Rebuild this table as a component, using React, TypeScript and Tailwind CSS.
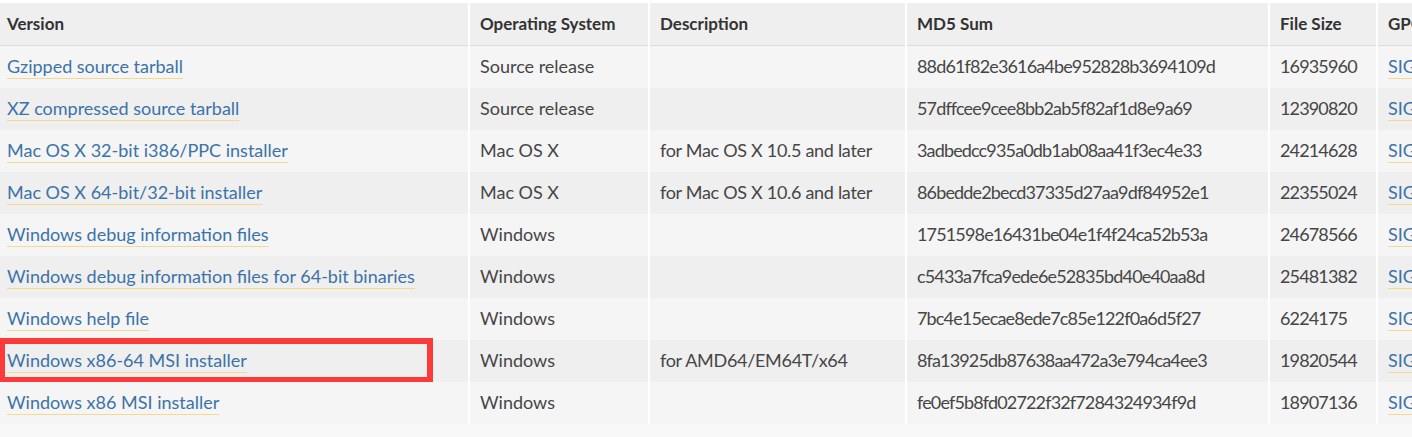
import React from "react";

type Row = {
  version: string;
  os: string;
  desc: string;
  md5: string;
  size: string;
  highlight?: boolean;
};

const rows: Row[] = [
  { version: "Gzipped source tarball", os: "Source release", desc: "", md5: "88d61f82e3616a4be952828b3694109d", size: "16935960" },
  { version: "XZ compressed source tarball", os: "Source release", desc: "", md5: "57dffcee9cee8bb2ab5f82af1d8e9a69", size: "12390820" },
  { version: "Mac OS X 32-bit i386/PPC installer", os: "Mac OS X", desc: "for Mac OS X 10.5 and later", md5: "3adbedcc935a0db1ab08aa41f3ec4e33", size: "24214628" },
  { version: "Mac OS X 64-bit/32-bit installer", os: "Mac OS X", desc: "for Mac OS X 10.6 and later", md5: "86bedde2becd37335d27aa9df84952e1", size: "22355024" },
  { version: "Windows debug information files", os: "Windows", desc: "", md5: "1751598e16431be04e1f4f24ca52b53a", size: "24678566" },
  { version: "Windows debug information files for 64-bit binaries", os: "Windows", desc: "", md5: "c5433a7fca9ede6e52835bd40e40aa8d", size: "25481382" },
  { version: "Windows help file", os: "Windows", desc: "", md5: "7bc4e15ecae8ede7c85e122f0a6d5f27", size: "6224175" },
  { version: "Windows x86-64 MSI installer", os: "Windows", desc: "for AMD64/EM64T/x64", md5: "8fa13925db87638aa472a3e794ca4ee3", size: "19820544", highlight: true },
  { version: "Windows x86 MSI installer", os: "Windows", desc: "", md5: "fe0ef5b8fd02722f32f7284324934f9d", size: "18907136" },
];

function Link({ children }: { children: React.ReactNode }) {
  return (
    <a className="text-[#3b73a8] underline decoration-[#f6d98a] decoration-1 underline-offset-[5px] whitespace-nowrap">
      {children}
    </a>
  );
}

export default function App() {
  const headers = ["Version", "Operating System", "Description", "MD5 Sum", "File Size", "GPG Signature"];
  return (
    <div className="w-[1412px] h-[437px] overflow-hidden bg-[#f8f8f8] font-[Lato,sans-serif] text-[18px] text-[#464646]">
      <div className="bg-white pt-[3px] grid grid-cols-[468px_178px_255px_361px_106px_1fr] gap-x-[2px]">
        {headers.map((h, i) => (
          <div
            key={h}
            className={`h-[43px] bg-[#efefef] border-b border-[#dcdcdc] flex items-center text-[17px] font-bold text-[#333] whitespace-nowrap overflow-hidden ${i === 0 ? "pl-[7px]" : "pl-[10px]"}`}
          >
            {h}
          </div>
        ))}
        {rows.map((r, idx) => {
          const bg = idx % 2 === 0 ? "bg-[#f5f5f5]" : "bg-[#efefef]";
          return (
            <React.Fragment key={r.md5}>
              <div className={`h-[42px] ${bg} relative flex items-center pl-[7px] pb-[2px]`}>
                <Link>{r.version}</Link>
                {r.highlight && (
                  <div className="absolute left-[-1px] top-[-2px] w-[434px] h-[45px] border-[6px] border-[#fd3a3a]" />
                )}
              </div>
              <div className={`h-[42px] ${bg} flex items-center pl-[10px] pb-[2px] whitespace-nowrap`}>{r.os}</div>
              <div className={`h-[42px] ${bg} flex items-center pl-[10px] pb-[2px] whitespace-nowrap tracking-[-0.3px]`}>{r.desc}</div>
              <div className={`h-[42px] ${bg} flex items-center pl-[10px] pb-[2px] whitespace-nowrap tracking-[-0.85px]`}>{r.md5}</div>
              <div className={`h-[42px] ${bg} flex items-center pl-[10px] pb-[2px] whitespace-nowrap tracking-[-0.85px]`}>{r.size}</div>
              <div className={`h-[42px] ${bg} flex items-center pl-[10px] pb-[2px] whitespace-nowrap overflow-hidden`}>
                <Link>SIG</Link>
              </div>
            </React.Fragment>
          );
        })}
      </div>
    </div>
  );
}
